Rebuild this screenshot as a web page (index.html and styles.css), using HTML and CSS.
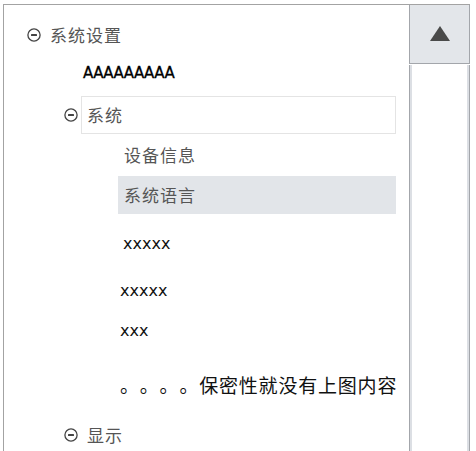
FILE: index.html
```html
<!DOCTYPE html>
<html lang="zh-CN">
<head>
<meta charset="utf-8">
<link rel="stylesheet" href="styles.css">
</head>
<body>
<div class="frame">
  <div class="tree">
    <div class="node lvl1">
      <svg class="tog" viewBox="0 0 14 14"><circle cx="7" cy="7" r="6.1" fill="none" stroke="#444" stroke-width="1.3"/><rect x="4" y="6" width="6" height="2" rx="0.5" fill="#444"/></svg>
      <span class="label">系统设置</span>
    </div>
    <div class="node leafA"><span class="aaa">AAAAAAAAA</span></div>
    <div class="node lvl2 g4">
      <svg class="tog" viewBox="0 0 14 14"><circle cx="7" cy="7" r="6.1" fill="none" stroke="#444" stroke-width="1.3"/><rect x="4" y="6" width="6" height="2" rx="0.5" fill="#444"/></svg>
      <div class="box"><span class="label">系统</span></div>
    </div>
    <div class="node lvl3 g2"><span class="label">设备信息</span></div>
    <div class="node lvl3 sel g2"><span class="label">系统语言</span></div>
    <div class="node xrow first g10"><span class="xs">xxxxx</span></div>
    <div class="node xrow g9"><span class="xs">xxxxx</span></div>
    <div class="node xrow g2"><span class="xs">xxx</span></div>
    <div class="node xrow g16"><span class="secret">。。。。保密性就没有上图内容</span></div>
    <div class="node lvl2 g13">
      <svg class="tog" viewBox="0 0 14 14"><circle cx="7" cy="7" r="6.1" fill="none" stroke="#444" stroke-width="1.3"/><rect x="4" y="6" width="6" height="2" rx="0.5" fill="#444"/></svg>
      <div class="plain"><span class="label">显示</span></div>
    </div>
  </div>
  <div class="scroll">
    <div class="btn"><span class="tri"></span></div>
    <div class="track"></div>
  </div>
</div>
</body>
</html>
```
FILE: styles.css
```css
html, body {
  margin: 0;
  padding: 0;
  background: #fff;
  overflow: hidden;
}
body {
  width: 476px;
  height: 451px;
  font-family: "Noto Sans CJK SC", "Noto Sans", sans-serif;
  text-spacing-trim: space-all;
}
.frame {
  margin: 4px 0 0 3px;
  width: 466px;
  height: 460px;
  border-left: 1px solid #a3a3a3;
  border-top: 1px solid #a3a3a3;
  display: flex;
}
.tree {
  flex: 1;
  padding-top: 11px;
  display: flex;
  flex-direction: column;
}
.node {
  height: 38px;
  flex: 0 0 38px;
  display: flex;
  align-items: center;
  box-sizing: border-box;
}
.g2 { margin-top: 2px; }
.g4 { margin-top: 4px; }
.g9 { margin-top: 9px; }
.g10 { margin-top: 10px; }
.g13 { margin-top: 13px; }
.g16 { margin-top: 16px; }
.tog {
  width: 14px;
  height: 14px;
  flex: 0 0 14px;
}
.label {
  font-size: 17px;
  letter-spacing: 1px;
  color: #555;
  line-height: 20px;
}
.lvl1 { padding-left: 23px; }
.lvl1 .label { margin-left: 9px; }
.leafA { padding-left: 79px; }
.aaa {
  font-family: "DejaVu Sans", sans-serif;
  font-size: 15px;
  letter-spacing: -0.5px;
  color: #000;
  -webkit-text-stroke: 0.3px #000;
}
.lvl2 { padding-left: 60px; padding-right: 13px; }
.box {
  margin-left: 3px;
  flex: 1;
  height: 38px;
  box-sizing: border-box;
  border: 1px solid #e4e4e4;
  display: flex;
  align-items: center;
  padding-left: 5px;
}
.plain {
  margin-left: 3px;
  flex: 1;
  display: flex;
  align-items: center;
  padding-left: 6px;
}
.lvl3 {
  margin-left: 114px;
  margin-right: 13px;
  padding-left: 6px;
}
.sel { background: #e2e5e9; }
.xrow { padding-left: 116px; }
.xrow.first { padding-left: 119px; }
.xs {
  font-family: "DejaVu Sans", sans-serif;
  font-size: 16px;
  color: #111;
}
.secret {
  font-size: 19px;
  letter-spacing: 0.8px;
  color: #111;
  white-space: nowrap;
  text-spacing-trim: space-all;
}
.scroll {
  width: 61px;
  flex: 0 0 61px;
  display: flex;
  flex-direction: column;
}
.btn {
  height: 59px;
  flex: 0 0 59px;
  box-sizing: border-box;
  background: #e3e6ea;
  border-left: 1px solid #a3a6ab;
  border-right: 1px solid #a3a6ab;
  border-bottom: 1px solid #a3a6ab;
  display: flex;
  align-items: center;
  justify-content: center;
}
.tri {
  width: 0;
  height: 0;
  border-left: 10px solid transparent;
  border-right: 10px solid transparent;
  border-bottom: 15px solid #4a4a4a;
  margin-top: -2px;
}
.track {
  flex: 1;
  margin-top: 1px;
  box-sizing: border-box;
  border-left: 1px solid #a3a6ab;
  border-right: 1px solid #a3a6ab;
  box-shadow: inset 2px 0 0 #dcdfe4, inset -2px 0 0 #dcdfe4;
  background: #fff;
}
```
